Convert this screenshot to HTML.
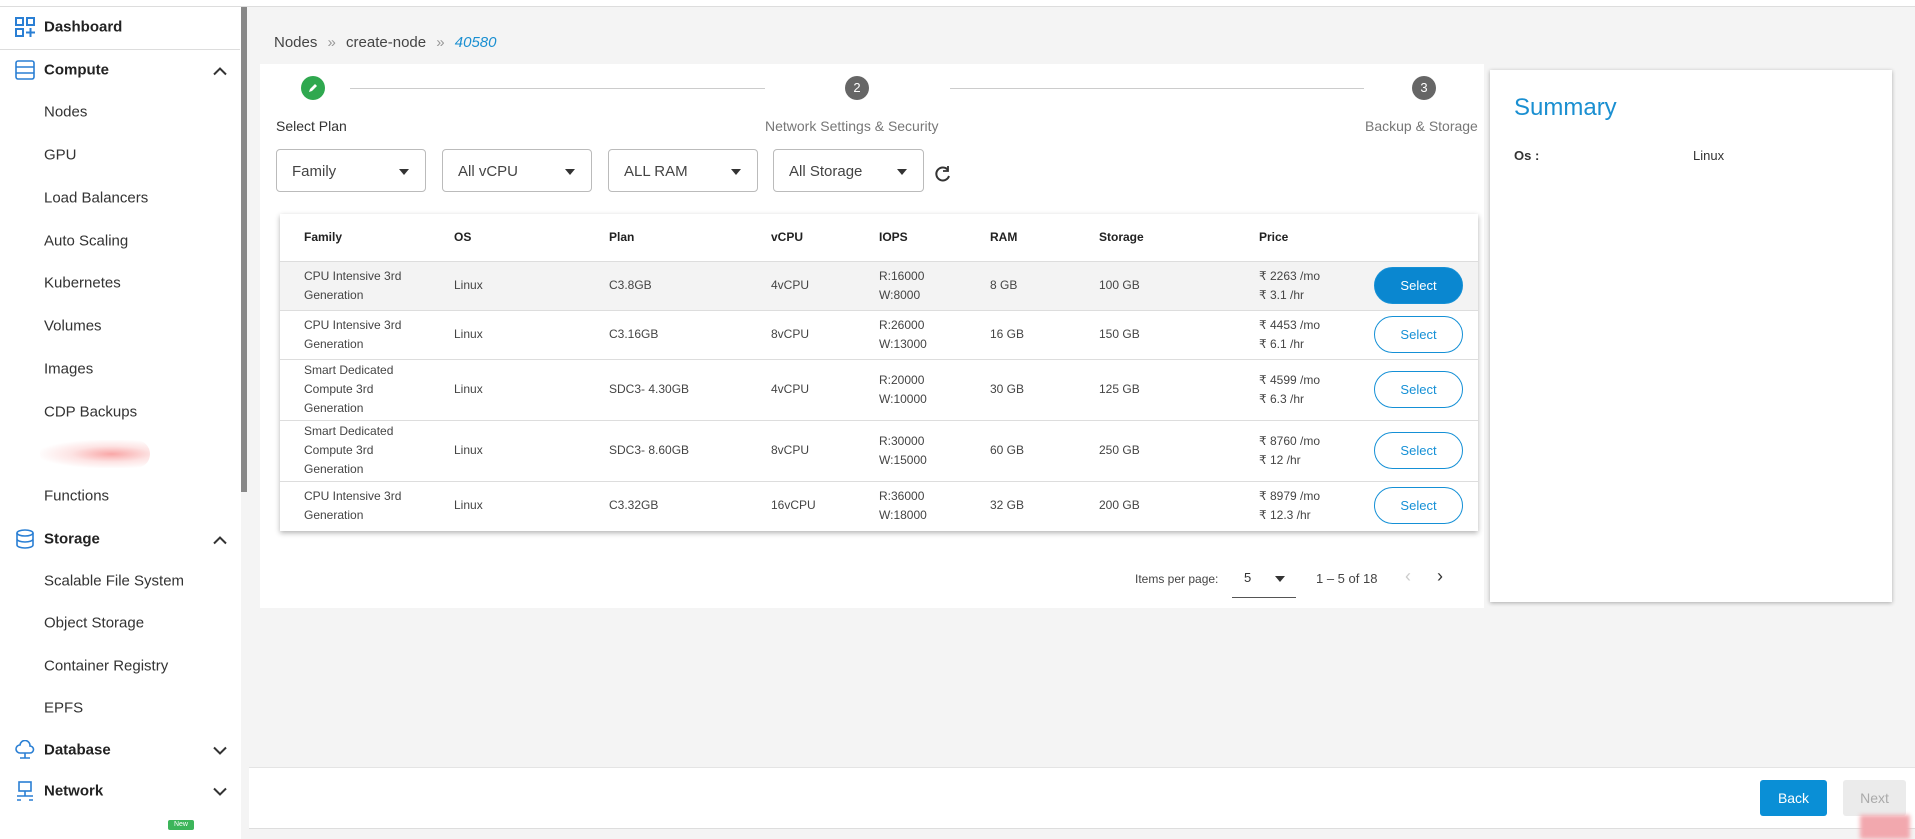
<!DOCTYPE html>
<html><head><meta charset="utf-8"><style>
*{box-sizing:border-box;margin:0;padding:0}
body{width:1915px;height:839px;overflow:hidden;background:#f4f4f4;font-family:"Liberation Sans",sans-serif;color:#333;position:relative}
.abs{position:absolute}
.topline{left:0;top:0;width:1915px;height:7px;background:#fff;border-bottom:1px solid #ddd}
.side{left:0;top:7px;width:241px;height:832px;background:#fff}
.sb{left:241px;top:7px;width:6px;height:485px;background:#888}
.si{position:absolute;left:44px;font-size:15px;color:#333;transform:translateY(-50%)}
.sh{font-weight:bold;color:#222}
.ico{position:absolute;left:15px;width:20px;height:20px;transform:translateY(-50%)}
.chev{position:absolute;left:213px;width:14px;height:9px;transform:translateY(-50%)}
.card{background:#fff}
.dd{position:absolute;top:149px;height:43px;border:1px solid #bbb;border-radius:4px;background:#fff;font-size:15px;color:#444;padding:13px 15px}
.dd:after{content:"";position:absolute;right:16px;top:19px;border-left:5px solid transparent;border-right:5px solid transparent;border-top:6px solid #333}
.circ{position:absolute;width:24px;height:24px;border-radius:50%;top:76px;color:#fff;font-size:13px;text-align:center;line-height:24px;background:#666}
.line{position:absolute;top:88px;height:1px;background:#ccc}
table{border-collapse:collapse;width:100%;font-size:12px;color:#444}
th{text-align:left;font-weight:bold;height:47px;font-size:12px;color:#222;border-bottom:1px solid #ddd}
td{border-bottom:1px solid #ddd;line-height:19px}
.btn{display:inline-block;width:89px;height:37px;border:1px solid #1590d6;border-radius:19px;color:#1590d6;text-align:center;line-height:35px;font-size:13px}
.btn.f{background:#0a87d0;color:#fff}
</style></head><body>
<div class="abs topline"></div>
<div class="abs side">
 <div class="abs" style="left:0;top:42px;width:240px;height:1px;background:#ddd"></div>
</div>
<div class="abs sb"></div>
<svg class="ico" style="top:27px" viewBox="0 0 20 20" fill="none" stroke="#2a7fd4" stroke-width="2"><rect x="1" y="1" width="7" height="7"/><rect x="12" y="1" width="7" height="7"/><rect x="1" y="12" width="7" height="7"/><path d="M15.5 11v9M11 15.5h9"/></svg>
<div class="si sh" style="top:27px">Dashboard</div>
<svg class="ico" style="top:70px" viewBox="0 0 20 20" fill="none" stroke="#2a7fd4" stroke-width="1.6"><rect x="1" y="1" width="18" height="18" rx="2"/><path d="M1 7h18M1 13h18"/></svg>
<div class="si sh" style="top:70px">Compute</div>
<svg class="chev" style="top:71px" viewBox="0 0 14 9" fill="none" stroke="#333" stroke-width="2"><path d="M1 8l6-6 6 6"/></svg>
<div class="si" style="top:112px">Nodes</div>
<div class="si" style="top:155px">GPU</div>
<div class="si" style="top:198px">Load Balancers</div>
<div class="si" style="top:241px">Auto Scaling</div>
<div class="si" style="top:283px">Kubernetes</div>
<div class="si" style="top:326px">Volumes</div>
<div class="si" style="top:369px">Images</div>
<div class="si" style="top:412px">CDP Backups</div>
<div class="abs" style="left:40px;top:440px;width:110px;height:28px;border-radius:14px;background:radial-gradient(ellipse at 65% 50%,#f9a7a7 0,#fde4e4 40%,#fff 75%)"></div>
<div class="si" style="top:496px">Functions</div>
<svg class="ico" style="top:539px" viewBox="0 0 20 20" fill="none" stroke="#2a7fd4" stroke-width="1.6"><ellipse cx="10" cy="4" rx="8" ry="3"/><path d="M2 4v12c0 1.7 3.6 3 8 3s8-1.3 8-3V4M2 10c0 1.7 3.6 3 8 3s8-1.3 8-3"/></svg>
<div class="si sh" style="top:539px">Storage</div>
<svg class="chev" style="top:540px" viewBox="0 0 14 9" fill="none" stroke="#333" stroke-width="2"><path d="M1 8l6-6 6 6"/></svg>
<div class="si" style="top:581px">Scalable File System</div>
<div class="si" style="top:623px">Object Storage</div>
<div class="si" style="top:666px">Container Registry</div>
<div class="si" style="top:708px">EPFS</div>
<svg class="ico" style="top:750px" viewBox="0 0 20 20" fill="none" stroke="#2a7fd4" stroke-width="1.6"><path d="M5 13a4 4 0 0 1 0-8 5 5 0 0 1 10 1 3.5 3.5 0 0 1 0 7zM10 13v5M5 18h10"/></svg>
<div class="si sh" style="top:750px">Database</div>
<svg class="chev" style="top:751px" viewBox="0 0 14 9" fill="none" stroke="#333" stroke-width="2"><path d="M1 1l6 6 6-6"/></svg>
<svg class="ico" style="top:791px" viewBox="0 0 20 20" fill="none" stroke="#2a7fd4" stroke-width="1.6"><rect x="4" y="1" width="12" height="9"/><path d="M10 10v5M2 15h16M2 19h4M14 19h4"/></svg>
<div class="si sh" style="top:791px">Network</div>
<svg class="chev" style="top:792px" viewBox="0 0 14 9" fill="none" stroke="#333" stroke-width="2"><path d="M1 1l6 6 6-6"/></svg>
<div class="abs" style="left:168px;top:820px;width:26px;height:10px;background:#3cb55a;color:#fff;font-size:7px;text-align:center;line-height:10px;border-radius:2px">New</div>

<div class="abs" style="left:274px;top:34px;font-size:15px;color:#444">Nodes <span style="color:#999;margin:0 6px">»</span> create-node <span style="color:#999;margin:0 6px">»</span> <i style="color:#1a8fd1">40580</i></div>

<div class="abs card" style="left:260px;top:64px;width:1224px;height:544px"></div>
<div class="circ" style="left:301px;background:#2fa84f"><svg width="12" height="12" viewBox="0 0 12 12" style="margin-top:6px"><path d="M2 10l1-3 5-5 2 2-5 5z" fill="#fff"/></svg></div>
<div class="line" style="left:350px;width:415px"></div>
<div class="circ" style="left:845px">2</div>
<div class="line" style="left:950px;width:414px"></div>
<div class="circ" style="left:1412px">3</div>
<div class="abs" style="left:276px;top:118px;font-size:14px;color:#333">Select Plan</div>
<div class="abs" style="left:765px;top:118px;font-size:14px;color:#777">Network Settings &amp; Security</div>
<div class="abs" style="left:1365px;top:118px;font-size:14px;color:#777">Backup &amp; Storage</div>

<div class="dd" style="left:276px;width:150px">Family</div>
<div class="dd" style="left:442px;width:150px">All vCPU</div>
<div class="dd" style="left:608px;width:150px">ALL RAM</div>
<div class="dd" style="left:773px;width:151px">All Storage</div>
<svg class="abs" style="left:934px;top:165px" width="18" height="18" viewBox="0 0 18 18" fill="none" stroke="#333" stroke-width="2"><path d="M14 5A6.5 6.5 0 1 0 15 11"/><path d="M14 1v5h-5" stroke-width="1.8"/></svg>

<div class="abs" style="left:280px;top:214px;width:1198px;height:317px;background:#fff;box-shadow:0 2px 5px rgba(0,0,0,.3)">
<table>
<colgroup><col style="width:174px"><col style="width:155px"><col style="width:162px"><col style="width:108px"><col style="width:111px"><col style="width:109px"><col style="width:160px"><col style="width:115px"><col></colgroup>
<tr><th style="padding-left:24px">Family</th><th>OS</th><th>Plan</th><th>vCPU</th><th>IOPS</th><th>RAM</th><th>Storage</th><th>Price</th><th></th></tr>
<tr style="height:49px;background:#f3f3f3"><td style="padding-left:24px">CPU Intensive 3rd<br>Generation</td><td>Linux</td><td>C3.8GB</td><td>4vCPU</td><td>R:16000<br>W:8000</td><td>8 GB</td><td>100 GB</td><td>₹ 2263 /mo<br>₹ 3.1 /hr</td><td><span class="btn f">Select</span></td></tr>
<tr style="height:49px"><td style="padding-left:24px">CPU Intensive 3rd<br>Generation</td><td>Linux</td><td>C3.16GB</td><td>8vCPU</td><td>R:26000<br>W:13000</td><td>16 GB</td><td>150 GB</td><td>₹ 4453 /mo<br>₹ 6.1 /hr</td><td><span class="btn">Select</span></td></tr>
<tr style="height:61px"><td style="padding-left:24px">Smart Dedicated<br>Compute 3rd<br>Generation</td><td>Linux</td><td>SDC3- 4.30GB</td><td>4vCPU</td><td>R:20000<br>W:10000</td><td>30 GB</td><td>125 GB</td><td>₹ 4599 /mo<br>₹ 6.3 /hr</td><td><span class="btn">Select</span></td></tr>
<tr style="height:61px"><td style="padding-left:24px">Smart Dedicated<br>Compute 3rd<br>Generation</td><td>Linux</td><td>SDC3- 8.60GB</td><td>8vCPU</td><td>R:30000<br>W:15000</td><td>60 GB</td><td>250 GB</td><td>₹ 8760 /mo<br>₹ 12 /hr</td><td><span class="btn">Select</span></td></tr>
<tr style="height:49px"><td style="padding-left:24px;border:0">CPU Intensive 3rd<br>Generation</td><td style="border:0">Linux</td><td style="border:0">C3.32GB</td><td style="border:0">16vCPU</td><td style="border:0">R:36000<br>W:18000</td><td style="border:0">32 GB</td><td style="border:0">200 GB</td><td style="border:0">₹ 8979 /mo<br>₹ 12.3 /hr</td><td style="border:0"><span class="btn">Select</span></td></tr>
</table></div>

<div class="abs" style="left:1135px;top:572px;font-size:12px;color:#444">Items per page:</div>
<div class="abs" style="left:1244px;top:570px;font-size:13px;color:#333">5</div>
<div class="abs" style="left:1275px;top:576px;border-left:5px solid transparent;border-right:5px solid transparent;border-top:6px solid #333"></div>
<div class="abs" style="left:1232px;top:597px;width:64px;height:1px;background:#555"></div>
<div class="abs" style="left:1316px;top:571px;font-size:13px;color:#444">1 – 5 of 18</div>
<div class="abs" style="left:1405px;top:566px;font-size:18px;color:#ccc">‹</div>
<div class="abs" style="left:1437px;top:566px;font-size:18px;color:#333">›</div>

<div class="abs card" style="left:1490px;top:70px;width:402px;height:532px;box-shadow:0 1px 4px rgba(0,0,0,.3)"></div>
<div class="abs" style="left:1514px;top:94px;font-size:24px;color:#1a8fd1">Summary</div>
<div class="abs" style="left:1514px;top:148px;font-size:13px;font-weight:bold;color:#333">Os :</div>
<div class="abs" style="left:1693px;top:148px;font-size:13px;color:#333">Linux</div>

<div class="abs card" style="left:249px;top:767px;width:1666px;height:62px;border-top:1px solid #e4e4e4;border-bottom:1px solid #ddd"></div>
<div class="abs" style="left:1760px;top:780px;width:67px;height:36px;background:#0a8fd6;color:#fff;border-radius:3px;text-align:center;line-height:36px;font-size:14px">Back</div>
<div class="abs" style="left:1843px;top:780px;width:63px;height:36px;background:#ebebeb;color:#aaa;border-radius:3px;text-align:center;line-height:36px;font-size:14px">Next</div>
<div class="abs" style="left:1860px;top:815px;width:50px;height:24px;background:#f2a8ae;filter:blur(2px)"></div>
</body></html>
